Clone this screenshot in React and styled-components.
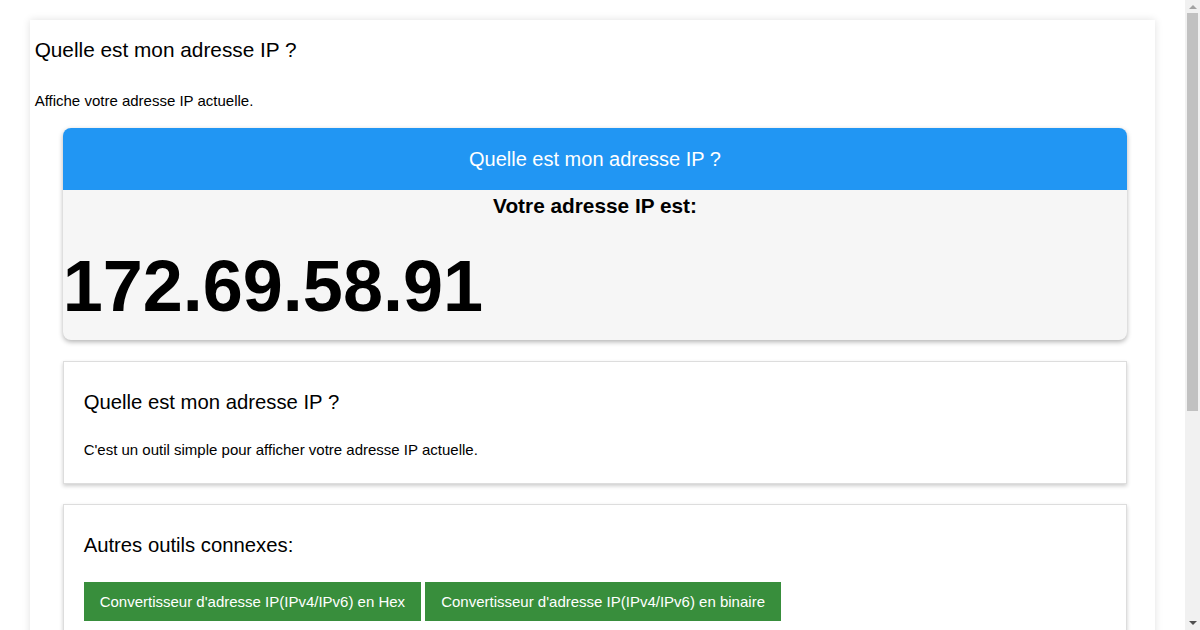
import React from 'react';
import styled, { createGlobalStyle } from 'styled-components';

const GlobalStyle = createGlobalStyle`
  body {
    margin: 0 15px 0 0;
    background: #fff;
    font-family: "Liberation Sans", Arial, sans-serif;
    color: #000;
  }
`;

/* the window's scrollbar, painted over the right edge */
const Scrollbar = styled.div`
  position: fixed;
  top: 0;
  right: 0;
  width: 15px;
  height: 100vh;
  background: #f1f1f1;
  display: flex;
  flex-direction: column;
  align-items: center;
  justify-content: space-between;
  padding: 5px 0;
  box-sizing: border-box;
`;

const Arrow = styled.span`
  display: block;
  width: 0;
  height: 0;
  border-left: 4px solid transparent;
  border-right: 4px solid transparent;
  ${p => (p.$down ? 'border-top: 4px solid #505050;' : 'border-bottom: 4px solid #a3a3a3;')}
`;

const Thumb = styled.div`
  position: absolute;
  top: 13px;
  left: 2px;
  width: 11px;
  height: 398px;
  background: #c1c1c1;
`;

const Page = styled.main`
  width: 95%;
  margin: 20px auto 0;
  padding: 5px 5px 280px;
  box-sizing: border-box;
  background: #fff;
  box-shadow: 0 0 8px rgba(0, 0, 0, 0.12);
`;

const PageTitle = styled.h1`
  font-size: 20.8px;
  font-weight: normal;
  line-height: 24px;
  margin: 13px 0 0;
`;

const Lead = styled.p`
  font-size: 15px;
  line-height: 17px;
  margin: 30px 0 0;
`;

const Section = styled.section`
  margin: ${p => p.$top || 20}px 23px 0 28px;
`;

const ResultCard = styled(Section)`
  border-radius: 8px;
  overflow: hidden;
  background: #f6f6f6;
  box-shadow: 0 2px 5px rgba(0, 0, 0, 0.3);
  padding-bottom: 13px;
`;

const ResultHeader = styled.div`
  height: 62px;
  background: #2196f3;
  color: #fff;
  font-size: 20px;
  display: flex;
  align-items: center;
  justify-content: center;
`;

const ResultLabel = styled.div`
  font-size: 20.8px;
  font-weight: bold;
  line-height: 24px;
  text-align: center;
  margin-top: 4px;
`;

const IpValue = styled.div`
  font-size: 72px;
  font-weight: bold;
  margin-top: 27px;
`;

const InfoCard = styled(Section)`
  border: 1px solid #ddd;
  background: #fff;
  box-shadow: 0 2px 4px rgba(0, 0, 0, 0.2);
  padding: 29px 20px 25px;
`;

const CardTitle = styled.h2`
  font-size: 20.3px;
  font-weight: normal;
  line-height: 23px;
  margin: 0;
`;

const CardText = styled.p`
  font-size: 15px;
  line-height: 17px;
  margin: 27px 0 0;
`;

const ButtonRow = styled.div`
  display: flex;
  flex-wrap: wrap;
  gap: 4px;
  margin-top: 25px;
`;

const ToolButton = styled.a`
  display: inline-block;
  background: #388e3c;
  color: #fff;
  font-size: 15px;
  line-height: 17px;
  padding: 11px 16px;
  text-decoration: none;
  cursor: pointer;
`;

const TOOLS = [
  "Convertisseur d'adresse IP(IPv4/IPv6) en Hex",
  "Convertisseur d'adresse IP(IPv4/IPv6) en binaire",
];

const App = () => {
  return (
    <>
      <GlobalStyle />
      <Page>
        <PageTitle>Quelle est mon adresse IP ?</PageTitle>
        <Lead>Affiche votre adresse IP actuelle.</Lead>

        <ResultCard $top={19}>
          <ResultHeader>Quelle est mon adresse IP ?</ResultHeader>
          <ResultLabel>Votre adresse IP est:</ResultLabel>
          <IpValue>172.69.58.91</IpValue>
        </ResultCard>

        <InfoCard $top={21}>
          <CardTitle>Quelle est mon adresse IP ?</CardTitle>
          <CardText>C'est un outil simple pour afficher votre adresse IP actuelle.</CardText>
        </InfoCard>

        <InfoCard>
          <CardTitle>Autres outils connexes:</CardTitle>
          <ButtonRow>
            {TOOLS.map((t, i) => (
              <ToolButton key={i}>{t}</ToolButton>
            ))}
          </ButtonRow>
        </InfoCard>
      </Page>
      <Scrollbar>
        <Arrow />
        <Thumb />
        <Arrow $down />
      </Scrollbar>
    </>
  );
};

export default App;
